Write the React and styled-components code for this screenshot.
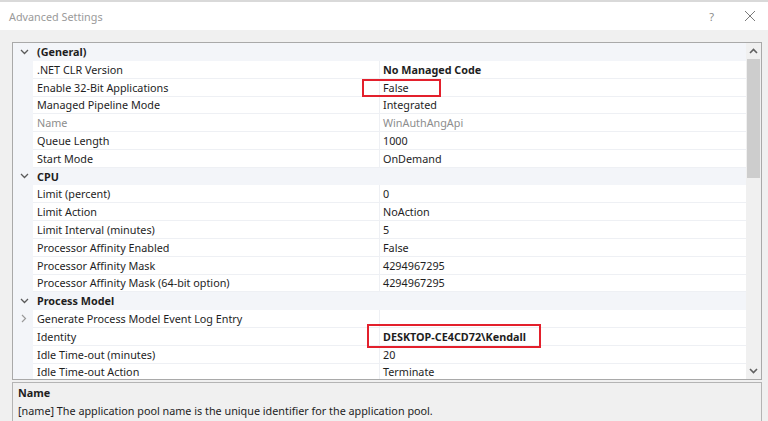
import styled, { createGlobalStyle } from "styled-components";

const GlobalStyle = createGlobalStyle`
  html, body { margin: 0; padding: 0; background: #f0f0f0; }
  body { font-family: "Noto Sans", "Open Sans", sans-serif; }
  * { box-sizing: border-box; }
`;

const sections = [
  {
    title: "(General)",
    rows: [
      { name: ".NET CLR Version", value: "No Managed Code", bold: true },
      { name: "Enable 32-Bit Applications", value: "False", mark: { left: -18, top: 0, width: 79, height: 18 } },
      { name: "Managed Pipeline Mode", value: "Integrated" },
      { name: "Name", value: "WinAuthAngApi", disabled: true },
      { name: "Queue Length", value: "1000" },
      { name: "Start Mode", value: "OnDemand" },
    ],
  },
  {
    title: "CPU",
    rows: [
      { name: "Limit (percent)", value: "0" },
      { name: "Limit Action", value: "NoAction" },
      { name: "Limit Interval (minutes)", value: "5" },
      { name: "Processor Affinity Enabled", value: "False" },
      { name: "Processor Affinity Mask", value: "4294967295" },
      { name: "Processor Affinity Mask (64-bit option)", value: "4294967295" },
    ],
  },
  {
    title: "Process Model",
    rows: [
      { name: "Generate Process Model Event Log Entry", value: "", expandable: true },
      { name: "Identity", value: "DESKTOP-CE4CD72\\Kendall", bold: true, mark: { left: -13, top: -4, width: 174, height: 24 } },
      { name: "Idle Time-out (minutes)", value: "20" },
      { name: "Idle Time-out Action", value: "Terminate" },
    ],
  },
];

function ChevronDown() {
  return (
    <svg width="9" height="6" viewBox="0 0 9 6">
      <path d="M1 1 L4.5 4.5 L8 1" fill="none" stroke="#5a5a5a" strokeWidth="1.3" />
    </svg>
  );
}

function ChevronRight() {
  return (
    <svg width="6" height="9" viewBox="0 0 6 9">
      <path d="M1 1 L4.5 4.5 L1 8" fill="none" stroke="#9a9a9a" strokeWidth="1.2" />
    </svg>
  );
}

export default function App() {
  return (
    <>
      <GlobalStyle />
      <Window>
        <TitleBar>
          <Title>Advanced Settings</Title>
          <TitleButtons>
            <Help>?</Help>
            <svg width="12" height="12" viewBox="0 0 12 12">
              <path d="M1 1 L11 11 M11 1 L1 11" stroke="#7a7a7a" strokeWidth="1" />
            </svg>
          </TitleButtons>
        </TitleBar>
        <Body>
          <Grid>
            <RowsArea>
              {sections.map((s) => (
                <div key={s.title}>
                  <CategoryRow>
                    <Gutter><ChevronDown /></Gutter>
                    <CategoryName>{s.title}</CategoryName>
                  </CategoryRow>
                  {s.rows.map((r) => (
                    <PropRow key={r.name}>
                      <Gutter>{r.expandable && <ChevronRight />}</Gutter>
                      <NameCell $disabled={r.disabled}>{r.name}</NameCell>
                      <ValueCell $disabled={r.disabled} $bold={r.bold}>
                        {r.value}
                        {r.mark && (
                          <RedMark
                            style={{ left: r.mark.left, top: r.mark.top, width: r.mark.width, height: r.mark.height }}
                          />
                        )}
                      </ValueCell>
                    </PropRow>
                  ))}
                </div>
              ))}
            </RowsArea>
            <Scrollbar>
              <ScrollArrow>
                <svg width="9" height="6" viewBox="0 0 9 6">
                  <path d="M1 5 L4.5 1.5 L8 5" fill="none" stroke="#606060" strokeWidth="1.6" />
                </svg>
              </ScrollArrow>
              <Thumb />
              <Track />
              <ScrollArrow>
                <svg width="9" height="6" viewBox="0 0 9 6">
                  <path d="M1 1 L4.5 4.5 L8 1" fill="none" stroke="#606060" strokeWidth="1.6" />
                </svg>
              </ScrollArrow>
            </Scrollbar>
          </Grid>
          <Description>
            <DescTitle>Name</DescTitle>
            <DescText>[name] The application pool name is the unique identifier for the application pool.</DescText>
          </Description>
        </Body>
      </Window>
    </>
  );
}

const Window = styled.div`
  width: 768px;
  height: 421px;
  overflow: hidden;
  display: flex;
  flex-direction: column;
  background: #f0f0f0;
  border-top: 2px solid #d9d9d9;
`;

const TitleBar = styled.div`
  height: 28px;
  background: #ffffff;
  display: flex;
  align-items: center;
  justify-content: space-between;
  padding: 0 12px 0 9px;
`;

const Title = styled.div`
  font-size: 10.8px;
  color: #9a9a9a;
`;

const TitleButtons = styled.div`
  display: flex;
  align-items: center;
  gap: 30px;
`;

const Help = styled.span`
  font-size: 11px;
  color: #8a8a8a;
`;

const Body = styled.div`
  flex: 1;
  padding: 12px 6px 0 12px;
  display: flex;
  flex-direction: column;
  gap: 2px;
  min-height: 0;
`;

const Grid = styled.div`
  height: 339px;
  border: 1px solid #a9a9a9;
  background: #ffffff;
  display: flex;
  overflow: hidden;
`;

const RowsArea = styled.div`
  flex: 1;
  overflow: hidden;
  font-size: 10.8px;
  color: #1e1e1e;
`;

const RowBase = styled.div`
  display: grid;
  grid-template-columns: 20px 346px 1px 1fr;
  height: 17.8px;
  line-height: 17px;
`;

const CategoryRow = styled(RowBase)`
  background: #f3f5f9;
  grid-template-columns: 20px 1fr;
`;

const PropRow = styled(RowBase)``;

const Gutter = styled.div`
  background: #f3f5f9;
  display: flex;
  align-items: center;
  justify-content: center;
  padding-left: 2px;
`;

const CategoryName = styled.div`
  font-weight: 700;
  padding-left: 4px;
`;

const NameCell = styled.div`
  padding-left: 4px;
  border-bottom: 1px solid #eef0f4;
  border-right: 1px solid #eef0f4;
  color: ${(p) => (p.$disabled ? "#8d8d8d" : "#1e1e1e")};
  white-space: nowrap;
  grid-column: 2 / span 2;
`;

const ValueCell = styled.div`
  position: relative;
  padding-left: 3px;
  border-bottom: 1px solid #eef0f4;
  font-weight: ${(p) => (p.$bold ? 700 : 400)};
  color: ${(p) => (p.$disabled ? "#8d8d8d" : "#1e1e1e")};
  white-space: nowrap;
`;

const RedMark = styled.span`
  position: absolute;
  border: 2px solid #e3202c;
  pointer-events: none;
`;

const Scrollbar = styled.div`
  width: 15px;
  background: #f0f0f0;
  display: flex;
  flex-direction: column;
`;

const ScrollArrow = styled.div`
  height: 16px;
  display: flex;
  align-items: center;
  justify-content: center;
`;

const Thumb = styled.div`
  height: 119px;
  margin: 0 1px;
  background: #cdcdcd;
`;

const Track = styled.div`
  flex: 1;
`;

const Description = styled.div`
  flex: 1;
  border: 1px solid #b4b4b4;
  border-bottom: none;
  background: #f0f0f0;
  padding: 1px 5px;
  font-size: 10.8px;
  color: #1e1e1e;
`;

const DescTitle = styled.div`
  font-weight: 700;
  line-height: 17px;
`;

const DescText = styled.div`
  line-height: 19px;
`;
